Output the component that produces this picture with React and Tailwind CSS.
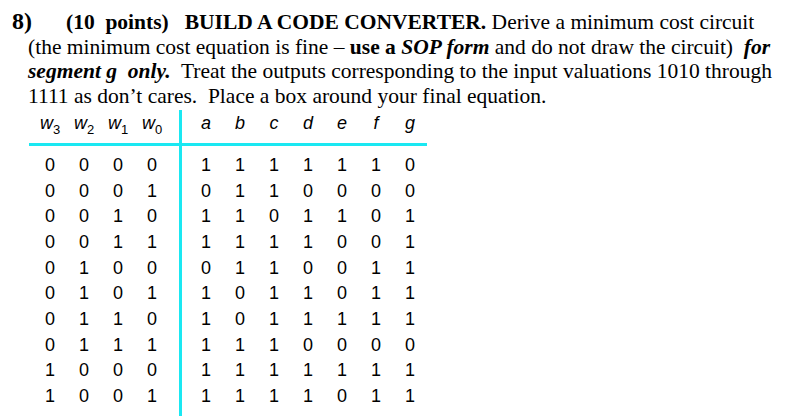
import React from "react";

const inputs = [
  "0000", "0001", "0010", "0011", "0100",
  "0101", "0110", "0111", "1000", "1001",
];
const outputs = [
  "1111110", "0110000", "1101101", "1111001", "0110011",
  "1011011", "1011111", "1110000", "1111111", "1111011",
];

function Divider() {
  return <div className="w-[3px] shrink-0 self-stretch bg-[#1ae8f2]" />;
}

export default function App() {
  return (
    <div className="w-[796px] h-[416px] overflow-hidden bg-white text-black flex flex-col">
      {/* question text */}
      <div className="pt-[9px] font-['Liberation_Serif',serif] text-[21.5px] leading-[24.7px] whitespace-pre">
        <div className="flex items-baseline pl-[12px]">
          <span className="font-bold text-[24px] w-[54px]">8)</span>
          <span className="font-bold">(10  points)</span>
          <span className="font-bold ml-[16px]">BUILD A CODE CONVERTER.</span>
          <span> Derive a minimum cost circuit</span>
        </div>
        <div className="pl-[28px]">
          (the minimum cost equation is fine – <b>use a </b>
          <b className="italic">SOP form</b> and do not draw the circuit)  <b className="italic">for</b>
        </div>
        <div className="pl-[28px]">
          <b className="italic">segment g  only.</b>  Treat the outputs corresponding to the input valuations 1010 through
        </div>
        <div className="pl-[28px]">1111 as don’t cares.  Place a box around your final equation.</div>
      </div>

      {/* truth table */}
      <div className="mt-[1px] ml-[29px] w-[398px] flex flex-col flex-1 font-['Liberation_Sans',Arial,sans-serif] text-[18px]">
        <div className="flex h-[33px]">
          <div className="w-[152px] pl-[4px] flex items-center pb-[6px]">
            {["3", "2", "1", "0"].map((n) => (
              <div key={n} className="w-[34px] text-center">
                <span className="italic">w</span>
                <span className="text-[13px] relative top-[5px]">{n}</span>
              </div>
            ))}
          </div>
          <Divider />
          <div className="flex-1 pl-[7px] flex items-center pb-[6px] italic">
            {["a", "b", "c", "d", "e", "f", "g"].map((l) => (
              <div key={l} className="w-[34px] text-center">{l}</div>
            ))}
          </div>
        </div>
        <div className="h-[3px] bg-[#1ae8f2]" />
        <div className="flex flex-1 leading-[25.7px]">
          <div className="w-[152px] pl-[4px] pt-[7px]">
            {inputs.map((row, i) => (
              <div key={i} className="flex">
                {row.split("").map((d, j) => (
                  <div key={j} className="w-[34px] text-center">{d}</div>
                ))}
              </div>
            ))}
          </div>
          <Divider />
          <div className="flex-1 pl-[7px] pt-[7px]">
            {outputs.map((row, i) => (
              <div key={i} className="flex">
                {row.split("").map((d, j) => (
                  <div key={j} className="w-[34px] text-center">{d}</div>
                ))}
              </div>
            ))}
          </div>
        </div>
      </div>
    </div>
  );
}
